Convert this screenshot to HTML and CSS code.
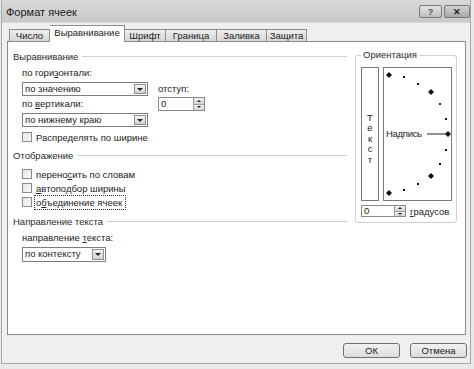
FILE: index.html
```html
<!DOCTYPE html>
<html lang="ru">
<head>
    <meta charset="UTF-8">
    <title>Формат ячеек</title>
    <link rel="stylesheet" href="styles.css">
</head>
<body>
    <div class="window">
        <div class="titlebar">
            <span class="title">Формат ячеек</span>
            <div class="caption-buttons">
                <span class="cap-btn help">?</span>
                <span class="cap-btn close">✕</span>
            </div>
        </div>

        <div class="tabs">
            <span class="tab">Число</span>
            <span class="tab active">Выравнивание</span>
            <span class="tab">Шрифт</span>
            <span class="tab">Граница</span>
            <span class="tab">Заливка</span>
            <span class="tab">Защита</span>
        </div>

        <div class="panel">
            <div class="left">
                <div class="group-title"><span>Выравнивание</span></div>
                <div class="align-row">
                    <div class="align-col">
                        <div class="label first">по гори<u>з</u>онтали:</div>
                        <div class="select wide">
                            <span class="value">по значению</span>
                            <span class="drop"></span>
                        </div>
                        <div class="label">по <u>в</u>ертикали:</div>
                        <div class="select wide">
                            <span class="value">по нижнему краю</span>
                            <span class="drop"></span>
                        </div>
                    </div>
                    <div class="indent-col">
                        <div class="label">отступ:</div>
                        <div class="spin">
                            <span class="value">0</span>
                            <span class="spin-btns"><span class="up"></span><span class="down"></span></span>
                        </div>
                    </div>
                </div>
                <label class="check distribute"><span class="box"></span>Распределять по ширине</label>

                <div class="group-title"><span>Отображение</span></div>
                <label class="check first-check"><span class="box"></span>перено<u>с</u>ить по словам</label>
                <label class="check"><span class="box"></span><u>а</u>втоподбор ширины</label>
                <label class="check"><span class="box"></span><span class="focus">о<u>б</u>ъединение ячеек</span></label>

                <div class="group-title dir"><span>Направление текста</span></div>
                <div class="label first">направление <u>т</u>екста:</div>
                <div class="select narrow">
                    <span class="value">по контексту</span>
                    <span class="drop"></span>
                </div>
            </div>

            <div class="orient">
                <span class="orient-title">Ориентация</span>
                <div class="orient-boxes">
                    <div class="vertical-text">
                        <span>Т</span><span>е</span><span>к</span><span>с</span><span>т</span>
                    </div>
                    <div class="dial">
                        <svg width="67" height="132" viewBox="0 0 67 132">
                            <line x1="43" y1="66" x2="63" y2="66" stroke="#222" stroke-width="1"/>
                            <g fill="#111">
                                <path d="M5 4 l3 3 l-3 3 l-3 -3z"/>
                                <rect x="19" y="8" width="2" height="2"/>
                                <rect x="33" y="15" width="2" height="2"/>
                                <path d="M47 21 l3 3 l-3 3 l-3 -3z"/>
                                <rect x="55" y="35" width="2" height="2"/>
                                <rect x="61" y="50" width="2" height="2"/>
                                <path d="M64 63 l3 3 l-3 3 l-3 -3z"/>
                                <rect x="61" y="81" width="2" height="2"/>
                                <rect x="55" y="95" width="2" height="2"/>
                                <path d="M47 105 l3 3 l-3 3 l-3 -3z"/>
                                <rect x="33" y="115" width="2" height="2"/>
                                <rect x="19" y="121" width="2" height="2"/>
                                <path d="M5 122 l3 3 l-3 3 l-3 -3z"/>
                            </g>
                        </svg>
                        <span class="dial-label">Надпись</span>
                    </div>
                </div>
                <div class="degrees">
                    <div class="spin small">
                        <span class="value">0</span>
                        <span class="spin-btns"><span class="up"></span><span class="down"></span></span>
                    </div>
                    <span><u>г</u>радусов</span>
                </div>
            </div>
        </div>

        <div class="footer">
            <span class="button">ОК</span>
            <span class="button">Отмена</span>
        </div>
    </div>
</body>
</html>
```

FILE: styles.css
```css
body {
    margin: 0;
    background: #e9e9e9;
    font-family: "Liberation Sans", Arial, sans-serif;
    font-size: 9.5px;
    color: #222;
}

u {
    text-decoration: underline;
    text-underline-offset: 1px;
}

.window {
    width: 470px;
    height: 364px;
    margin-left: 1px;
    background: #efefef;
    border: 1px solid #a6a6a6;
    border-top: none;
    box-sizing: border-box;
}

.titlebar {
    height: 22px;
    display: flex;
    align-items: center;
    justify-content: space-between;
    background: linear-gradient(#d9d9d9, #c9c9c9);
    border-bottom: 1px solid #d9d9d9;
    padding: 0 0 0 4px;
}

.title {
    font-size: 11px;
    color: #1a1a1a;
    margin-top: 1px;
}

.caption-buttons {
    display: flex;
    gap: 2px;
    margin-top: 1px;
}

.cap-btn {
    height: 11px;
    border: 1px solid #7a7a7a;
    border-radius: 2px;
    background: linear-gradient(#e4e4e4, #bdbdbd);
    display: flex;
    align-items: center;
    justify-content: center;
    font-size: 9px;
    font-weight: bold;
    color: #555;
}

.help {
    width: 21px;
}

.close {
    width: 24px;
    background: linear-gradient(#cfcfcf, #a9a9a9);
    color: #222;
}

.tabs {
    display: flex;
    align-items: flex-end;
    height: 17px;
    padding-left: 7px;
    margin-top: 1px;
}

.tab {
    box-sizing: border-box;
    height: 12px;
    line-height: 11px;
    border: 1px solid #8d8d8d;
    border-bottom: none;
    border-left: none;
    background: linear-gradient(#eeeeee, #d6d6d6);
    text-align: center;
    white-space: nowrap;
}

.tab:nth-child(1) {
    border-left: 1px solid #8d8d8d;
    width: 41px;
}

.tab.active {
    width: 75px;
    height: 17px;
    line-height: 14px;
    background: #fff;
    margin-bottom: -1px;
}

.tab:nth-child(3) { width: 41px; }
.tab:nth-child(4) { width: 51px; }
.tab:nth-child(5) { width: 50px; }
.tab:nth-child(6) { width: 40px; }

.panel {
    margin-left: 5px;
    width: 459px;
    height: 294px;
    background: #fff;
    border: 1px solid #8a8a8a;
    box-sizing: border-box;
    display: flex;
    padding: 7px 0 0 5px;
}

.left {
    width: 334px;
}

.group-title {
    display: flex;
    align-items: center;
    height: 14px;
    color: #2a2a2a;
}

.group-title::after {
    content: "";
    flex: 1;
    height: 1px;
    background: #cfcfcf;
    margin-left: 4px;
}

.label {
    height: 14px;
    line-height: 14px;
    margin-top: 1px;
    padding-left: 9px;
}

.label.first {
    margin-top: 3px;
}

.align-row {
    display: flex;
}

.align-col {
    width: 140px;
}

.select {
    margin: 2px 0 0 9px;
    height: 14px;
    border: 1px solid #7d7d7d;
    display: flex;
    justify-content: space-between;
    align-items: stretch;
    box-sizing: border-box;
    background: #fff;
}

.select.wide {
    width: 126px;
}

.select.narrow {
    width: 84px;
    height: 15px;
}

.value {
    line-height: 12px;
    padding-left: 2px;
}

.drop {
    width: 10px;
    margin: 1px;
    border: 1px solid #8c8c8c;
    background: linear-gradient(#f4f4f4, #d2d2d2);
    display: flex;
    align-items: center;
    justify-content: center;
}

.drop::after {
    content: "";
    border-left: 3px solid transparent;
    border-right: 3px solid transparent;
    border-top: 3px solid #222;
}

.indent-col {
    margin-left: 5px;
    padding-top: 17px;
}

.indent-col .label {
    padding-left: 0;
    margin-top: 2px;
}

.spin {
    margin-top: 1px;
    width: 47px;
    height: 14px;
    border: 1px solid #8a8a8a;
    box-sizing: border-box;
    display: flex;
    justify-content: space-between;
}

.spin-btns {
    display: flex;
    flex-direction: column;
    width: 10px;
    border-left: 1px solid #a0a0a0;
}

.spin-btns span {
    flex: 1;
    background: linear-gradient(#f2f2f2, #d4d4d4);
    display: flex;
    align-items: center;
    justify-content: center;
}

.spin-btns .up {
    border-bottom: 1px solid #a0a0a0;
}

.spin-btns .up::after {
    content: "";
    border-left: 2px solid transparent;
    border-right: 2px solid transparent;
    border-bottom: 2px solid #222;
}

.spin-btns .down::after {
    content: "";
    border-left: 2px solid transparent;
    border-right: 2px solid transparent;
    border-top: 2px solid #222;
}

.check {
    display: flex;
    align-items: center;
    height: 14px;
    margin-left: 9px;
}

.check .box {
    width: 8px;
    height: 8px;
    border: 1px solid #8a8a8a;
    background: linear-gradient(135deg, #e6e6e6, #fafafa);
    margin-right: 4px;
}

.check.distribute {
    margin-top: 3px;
    margin-bottom: 4px;
}

.check.first-check {
    margin-top: 5px;
}

.focus {
    outline: 1px dotted #333;
    outline-offset: 1px;
    padding-right: 2px;
}

.group-title.dir {
    margin-top: 5px;
}

.orient {
    width: 102px;
    height: 168px;
    margin: 6px 0 0 8px;
    border: 1px solid #d0d0d0;
    border-radius: 3px;
    box-sizing: border-box;
    position: relative;
    padding: 11px 0 0 5px;
}

.orient-title {
    position: absolute;
    top: -7px;
    left: 5px;
    background: #fff;
    padding: 0 2px;
    color: #2a2a2a;
}

.orient-boxes {
    display: flex;
    gap: 4px;
    height: 134px;
}

.vertical-text {
    width: 18px;
    border: 1px solid #7a7a7a;
    box-sizing: border-box;
    display: flex;
    flex-direction: column;
    align-items: center;
    justify-content: center;
    line-height: 10.5px;
    padding-top: 10px;
}

.dial {
    width: 69px;
    border: 1px solid #7a7a7a;
    box-sizing: border-box;
    position: relative;
}

.dial svg {
    display: block;
}

.dial-label {
    position: absolute;
    left: 2px;
    top: 60px;
    letter-spacing: -0.3px;
}

.degrees {
    display: flex;
    align-items: center;
    gap: 4px;
    margin-top: 4px;
}

.spin.small {
    width: 45px;
    height: 12px;
    margin-top: 0;
}

.spin.small .value {
    line-height: 10px;
}

.footer {
    display: flex;
    justify-content: flex-end;
    gap: 10px;
    padding: 8px 3px 0 0;
}

.button {
    width: 57px;
    height: 15px;
    line-height: 13px;
    border: 1px solid #707070;
    border-radius: 3px;
    box-sizing: border-box;
    background: linear-gradient(#f2f2f2, #dcdcdc);
    text-align: center;
}
```
